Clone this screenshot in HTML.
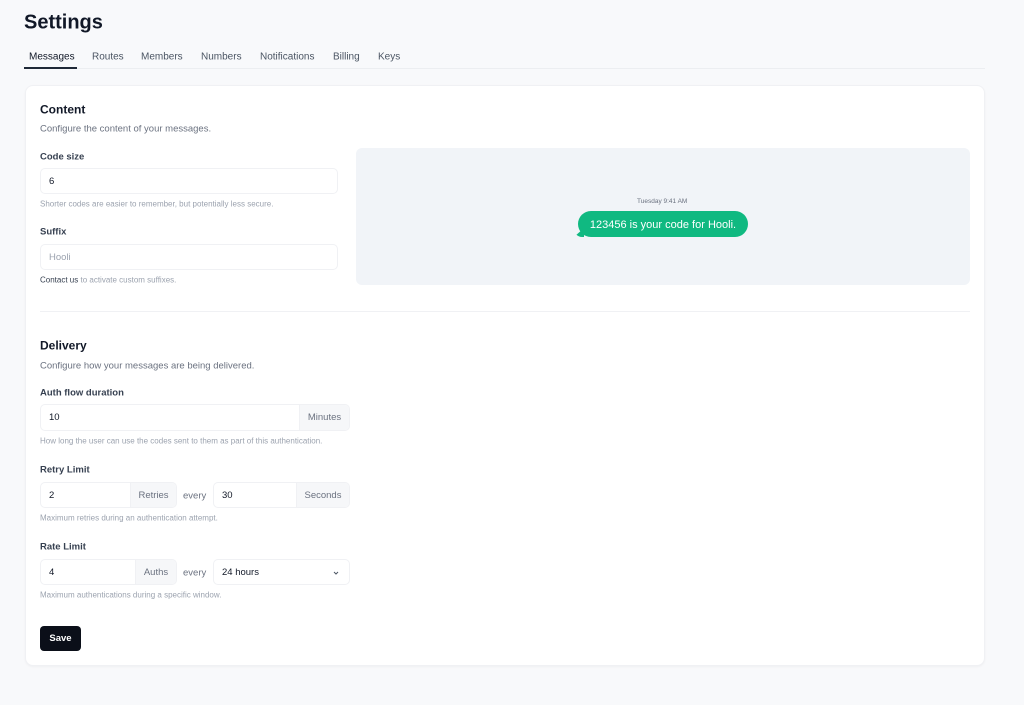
<!DOCTYPE html>
<html><head><style>
*{box-sizing:border-box;margin:0;padding:0}
body{width:1024px;height:705px;background:#f8f9fb;font-family:"Liberation Sans",sans-serif;position:relative;overflow:hidden;color:#111827}
.a{position:absolute}
.t{font-size:10px;color:#4b5563;transform:translateY(-40%)}
.h{font-size:12px;font-weight:bold;color:#111827;transform:translateY(-40%)}
.d{font-size:9.5px;color:#6b7280;transform:translateY(-40%)}
.l{font-size:9.5px;font-weight:bold;color:#374151;transform:translateY(-40%)}
.s{font-size:8px;color:#9ca3af;transform:translateY(-40%)}
.in{border:1px solid #f0f1f4;border-radius:5px;background:#fff;font-size:9.5px;display:flex;align-items:center;padding-left:8px;color:#111827;overflow:hidden}
.ad{position:absolute;top:0;bottom:0;right:0;background:#f6f7f9;border-left:1px solid #f0f1f4;color:#6b7280;display:flex;align-items:center;justify-content:center;font-size:9.5px}
</style></head><body>
<div class="a" style="left:24px;top:23px;font-size:20px;font-weight:bold;transform:translateY(-50%)">Settings</div>
<div class="a t" style="left:29px;top:56px;color:#111827">Messages</div>
<div class="a t" style="left:92px;top:56px">Routes</div>
<div class="a t" style="left:141px;top:56px">Members</div>
<div class="a t" style="left:201px;top:56px">Numbers</div>
<div class="a t" style="left:260px;top:56px">Notifications</div>
<div class="a t" style="left:333px;top:56px">Billing</div>
<div class="a t" style="left:378px;top:56px">Keys</div>
<div class="a" style="left:24px;top:68px;width:961px;height:1px;background:#eceef1"></div>
<div class="a" style="left:24px;top:67px;width:53px;height:2px;background:#1f2937"></div>
<div class="a" style="left:25px;top:85px;width:960px;height:581px;background:#fff;border-radius:8px;border:1px solid #f0f1f4;box-shadow:0 1px 2px rgba(0,0,0,.04)"></div>
<div class="a h" style="left:40px;top:108px">Content</div>
<div class="a d" style="left:40px;top:128px">Configure the content of your messages.</div>
<div class="a l" style="left:40px;top:156px">Code size</div>
<div class="a in" style="left:40px;top:168px;width:298px;height:26px">6</div>
<div class="a s" style="left:40px;top:203px">Shorter codes are easier to remember, but potentially less secure.</div>
<div class="a l" style="left:40px;top:231px">Suffix</div>
<div class="a in" style="left:40px;top:244px;width:298px;height:26px;color:#9ca3af">Hooli</div>
<div class="a s" style="left:40px;top:279px"><span style="color:#374151">Contact us</span> to activate custom suffixes.</div>
<div class="a" style="left:356px;top:148px;width:614px;height:137px;background:#f1f4f8;border-radius:6px"></div>
<div class="a" style="left:637px;top:201px;font-size:6.5px;color:#6b7280;transform:translateY(-40%)">Tuesday 9:41 AM</div>
<div class="a" style="left:578px;top:211px;width:170px;height:26px;background:#10b981;border-radius:13px;color:#fff;font-size:11px;display:flex;align-items:center;justify-content:center;padding-top:1px">123456 is your code for Hooli.</div>
<div class="a" style="left:574px;top:228px;width:10px;height:9px;background:#10b981;border-radius:0 0 0 8px;clip-path:polygon(0 100%,100% 0,100% 100%)"></div>
<div class="a" style="left:40px;top:311px;width:930px;height:1px;background:#f0f1f4"></div>
<div class="a h" style="left:40px;top:344px">Delivery</div>
<div class="a d" style="left:40px;top:365px">Configure how your messages are being delivered.</div>
<div class="a l" style="left:40px;top:392px">Auth flow duration</div>
<div class="a in" style="left:40px;top:404px;width:310px;height:27px">10<div class="ad" style="width:50px">Minutes</div></div>
<div class="a s" style="left:40px;top:440px">How long the user can use the codes sent to them as part of this authentication.</div>
<div class="a l" style="left:40px;top:469px">Retry Limit</div>
<div class="a in" style="left:40px;top:482px;width:137px;height:26px">2<div class="ad" style="width:46px">Retries</div></div>
<div class="a d" style="left:183px;top:495px">every</div>
<div class="a in" style="left:213px;top:482px;width:137px;height:26px">30<div class="ad" style="width:53px">Seconds</div></div>
<div class="a s" style="left:40px;top:517px">Maximum retries during an authentication attempt.</div>
<div class="a l" style="left:40px;top:546px">Rate Limit</div>
<div class="a in" style="left:40px;top:559px;width:137px;height:26px">4<div class="ad" style="width:41px">Auths</div></div>
<div class="a d" style="left:183px;top:572px">every</div>
<div class="a in" style="left:213px;top:559px;width:137px;height:26px">24 hours<svg class="a" style="right:10px;top:10px" width="6" height="6" viewBox="0 0 6 6"><path d="M1 2l2 2 2-2" fill="none" stroke="#4b5563" stroke-width="1"/></svg></div>
<div class="a s" style="left:40px;top:594px">Maximum authentications during a specific window.</div>
<div class="a" style="left:40px;top:626px;width:41px;height:25px;background:#0b0f19;border-radius:4px;color:#fff;font-size:9.5px;font-weight:bold;display:flex;align-items:center;justify-content:center">Save</div>
</body></html>
